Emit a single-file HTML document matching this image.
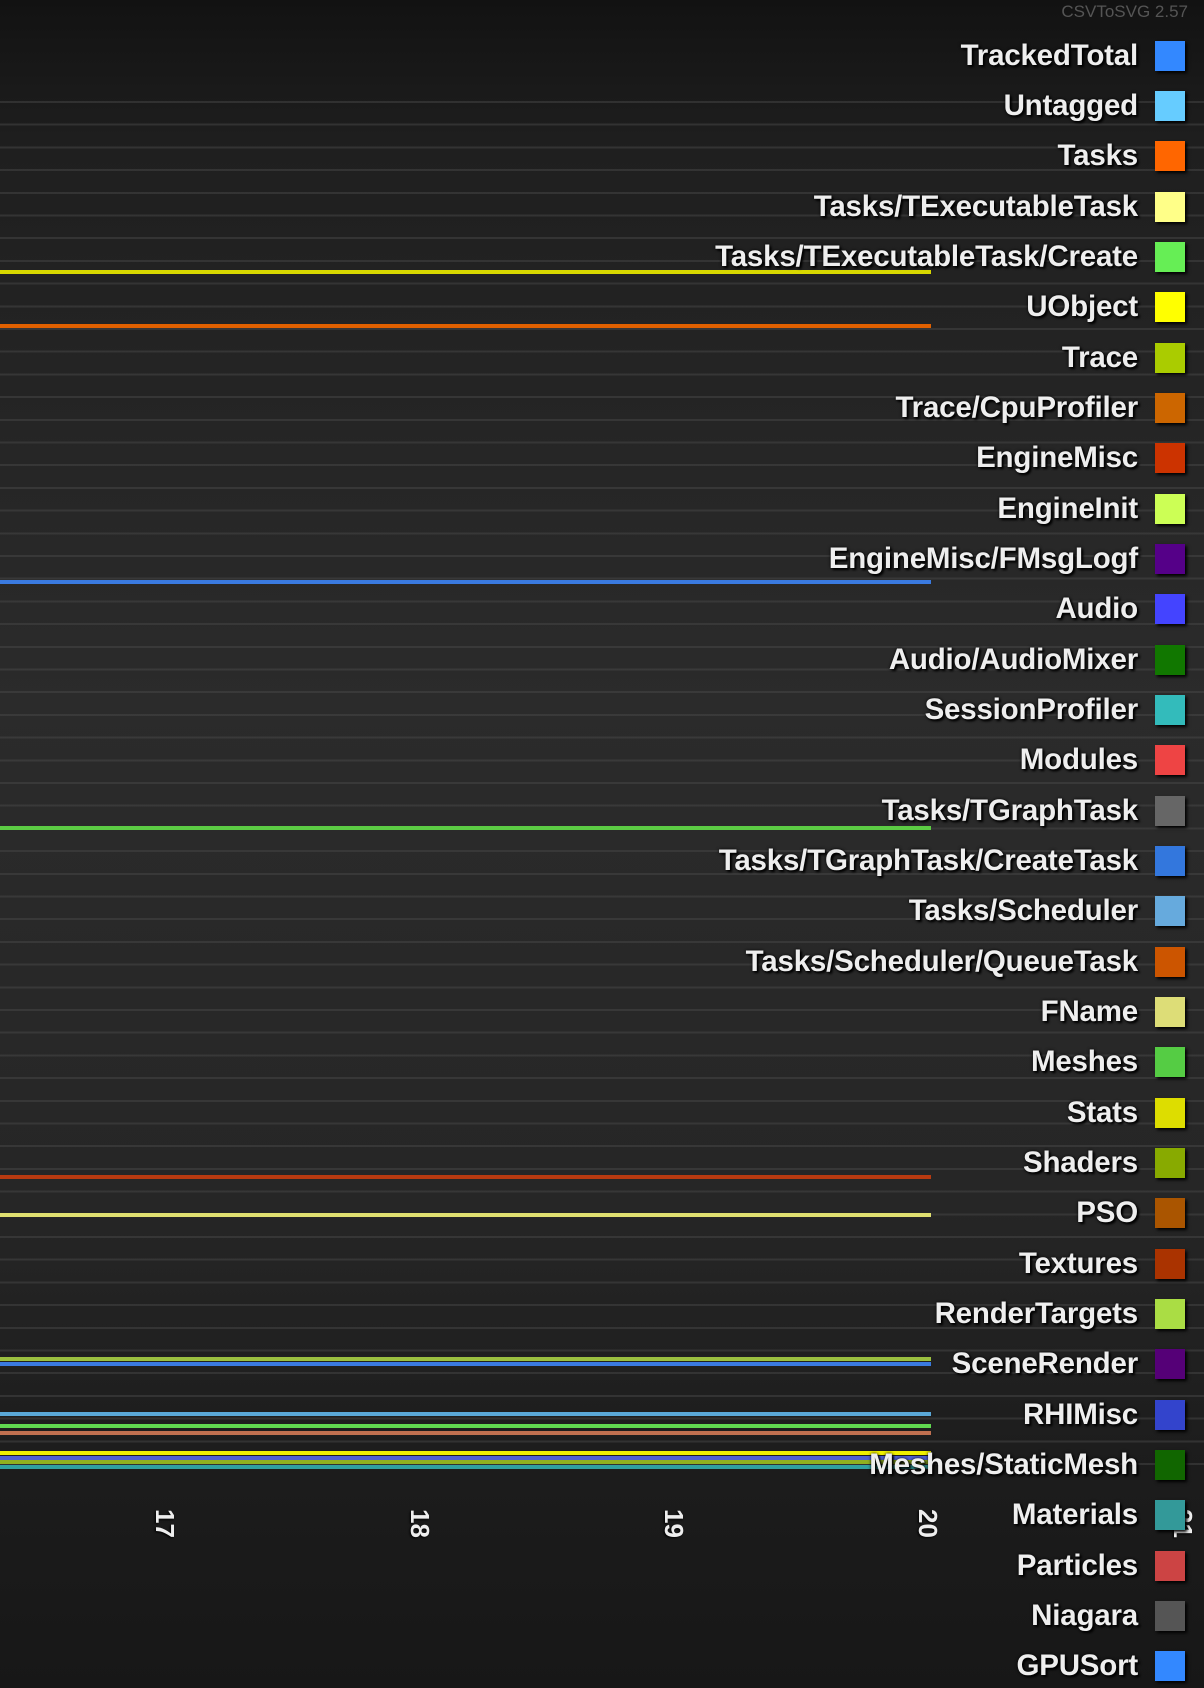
<!DOCTYPE html>
<html><head><meta charset="utf-8"><style>
html,body{margin:0;padding:0}
body{width:1204px;height:1688px;position:relative;overflow:hidden;background:linear-gradient(#121212 0px,#1f1f1f 150px,#2b2b2b 700px,#262626 1200px,#1c1c1c 1475px,#171717 1688px);font-family:"Liberation Sans",sans-serif}
.grid{position:absolute;left:0;top:90px;width:1204px;height:1390px;background:repeating-linear-gradient(to bottom,transparent 0px,transparent 11px,rgba(75,75,75,.45) 11px,rgba(75,75,75,.45) 13px,transparent 13px,transparent 22.7px)}
.l{position:absolute;left:0;width:931px;height:4px}
.lg{position:absolute;right:66px;font-weight:bold;font-size:29.5px;color:#eee;letter-spacing:-0.2px;text-shadow:2px 2px 2px #000,0 0 3px #000;line-height:30px;white-space:nowrap}
.sw{position:absolute;left:1155px;width:30px;height:30px;box-shadow:2px 2px 3px #000}
.ax{position:absolute;color:#eee;font-weight:bold;font-size:26px;transform:rotate(90deg);transform-origin:center;text-shadow:1px 1px 2px #000}
.ver{position:absolute;right:16px;top:2px;font-size:17px;color:#555}
</style></head><body>
<div class="grid"></div>
<div class="l" style="top:270px;background:#d8d800"></div>
<div class="l" style="top:324px;background:#e06000"></div>
<div class="l" style="top:580px;background:#3a7ae0"></div>
<div class="l" style="top:826px;background:#5ccc44"></div>
<div class="l" style="top:1175px;background:#b83a10"></div>
<div class="l" style="top:1213px;background:#e0e070"></div>
<div class="l" style="top:1357px;background:#9bc040"></div>
<div class="l" style="top:1362px;background:#3a7ae0"></div>
<div class="l" style="top:1412px;background:#5aa8d8"></div>
<div class="l" style="top:1424px;background:#60d850"></div>
<div class="l" style="top:1431px;background:#c07050"></div>
<div class="l" style="top:1451px;background:#f0f000"></div>
<div class="l" style="top:1456px;background:#5060d0"></div>
<div class="l" style="top:1460px;background:#90b020"></div>
<div class="l" style="top:1465px;background:#30a0a0"></div>
<div class="ax" style="left:150px;top:1508px">17</div>
<div class="ax" style="left:405px;top:1508px">18</div>
<div class="ax" style="left:659px;top:1508px">19</div>
<div class="ax" style="left:913px;top:1508px">20</div>
<div class="ax" style="left:1168px;top:1508px">21</div>
<div class="ver">CSVToSVG 2.57</div>
<div class="lg" style="top:41px">TrackedTotal</div><div class="sw" style="top:41px;background:#3388ff"></div>
<div class="lg" style="top:91px">Untagged</div><div class="sw" style="top:91px;background:#66ccff"></div>
<div class="lg" style="top:141px">Tasks</div><div class="sw" style="top:141px;background:#ff6600"></div>
<div class="lg" style="top:192px">Tasks/TExecutableTask</div><div class="sw" style="top:192px;background:#ffff88"></div>
<div class="lg" style="top:242px">Tasks/TExecutableTask/Create</div><div class="sw" style="top:242px;background:#66ee55"></div>
<div class="lg" style="top:292px">UObject</div><div class="sw" style="top:292px;background:#ffff00"></div>
<div class="lg" style="top:343px">Trace</div><div class="sw" style="top:343px;background:#aacc00"></div>
<div class="lg" style="top:393px">Trace/CpuProfiler</div><div class="sw" style="top:393px;background:#cc6600"></div>
<div class="lg" style="top:443px">EngineMisc</div><div class="sw" style="top:443px;background:#cc3300"></div>
<div class="lg" style="top:494px">EngineInit</div><div class="sw" style="top:494px;background:#ccff55"></div>
<div class="lg" style="top:544px">EngineMisc/FMsgLogf</div><div class="sw" style="top:544px;background:#550088"></div>
<div class="lg" style="top:594px">Audio</div><div class="sw" style="top:594px;background:#4444ff"></div>
<div class="lg" style="top:645px">Audio/AudioMixer</div><div class="sw" style="top:645px;background:#117700"></div>
<div class="lg" style="top:695px">SessionProfiler</div><div class="sw" style="top:695px;background:#33bbbb"></div>
<div class="lg" style="top:745px">Modules</div><div class="sw" style="top:745px;background:#ee4444"></div>
<div class="lg" style="top:796px">Tasks/TGraphTask</div><div class="sw" style="top:796px;background:#666666"></div>
<div class="lg" style="top:846px">Tasks/TGraphTask/CreateTask</div><div class="sw" style="top:846px;background:#3377dd"></div>
<div class="lg" style="top:896px">Tasks/Scheduler</div><div class="sw" style="top:896px;background:#66aadd"></div>
<div class="lg" style="top:947px">Tasks/Scheduler/QueueTask</div><div class="sw" style="top:947px;background:#cc5500"></div>
<div class="lg" style="top:997px">FName</div><div class="sw" style="top:997px;background:#dddd77"></div>
<div class="lg" style="top:1047px">Meshes</div><div class="sw" style="top:1047px;background:#55cc44"></div>
<div class="lg" style="top:1098px">Stats</div><div class="sw" style="top:1098px;background:#dddd00"></div>
<div class="lg" style="top:1148px">Shaders</div><div class="sw" style="top:1148px;background:#88aa00"></div>
<div class="lg" style="top:1198px">PSO</div><div class="sw" style="top:1198px;background:#aa5500"></div>
<div class="lg" style="top:1249px">Textures</div><div class="sw" style="top:1249px;background:#aa3300"></div>
<div class="lg" style="top:1299px">RenderTargets</div><div class="sw" style="top:1299px;background:#aadd44"></div>
<div class="lg" style="top:1349px">SceneRender</div><div class="sw" style="top:1349px;background:#550077"></div>
<div class="lg" style="top:1400px">RHIMisc</div><div class="sw" style="top:1400px;background:#3344cc"></div>
<div class="lg" style="top:1450px">Meshes/StaticMesh</div><div class="sw" style="top:1450px;background:#116600"></div>
<div class="lg" style="top:1500px">Materials</div><div class="sw" style="top:1500px;background:#339999"></div>
<div class="lg" style="top:1551px">Particles</div><div class="sw" style="top:1551px;background:#cc4444"></div>
<div class="lg" style="top:1601px">Niagara</div><div class="sw" style="top:1601px;background:#555555"></div>
<div class="lg" style="top:1651px">GPUSort</div><div class="sw" style="top:1651px;background:#3388ff"></div>
</body></html>
